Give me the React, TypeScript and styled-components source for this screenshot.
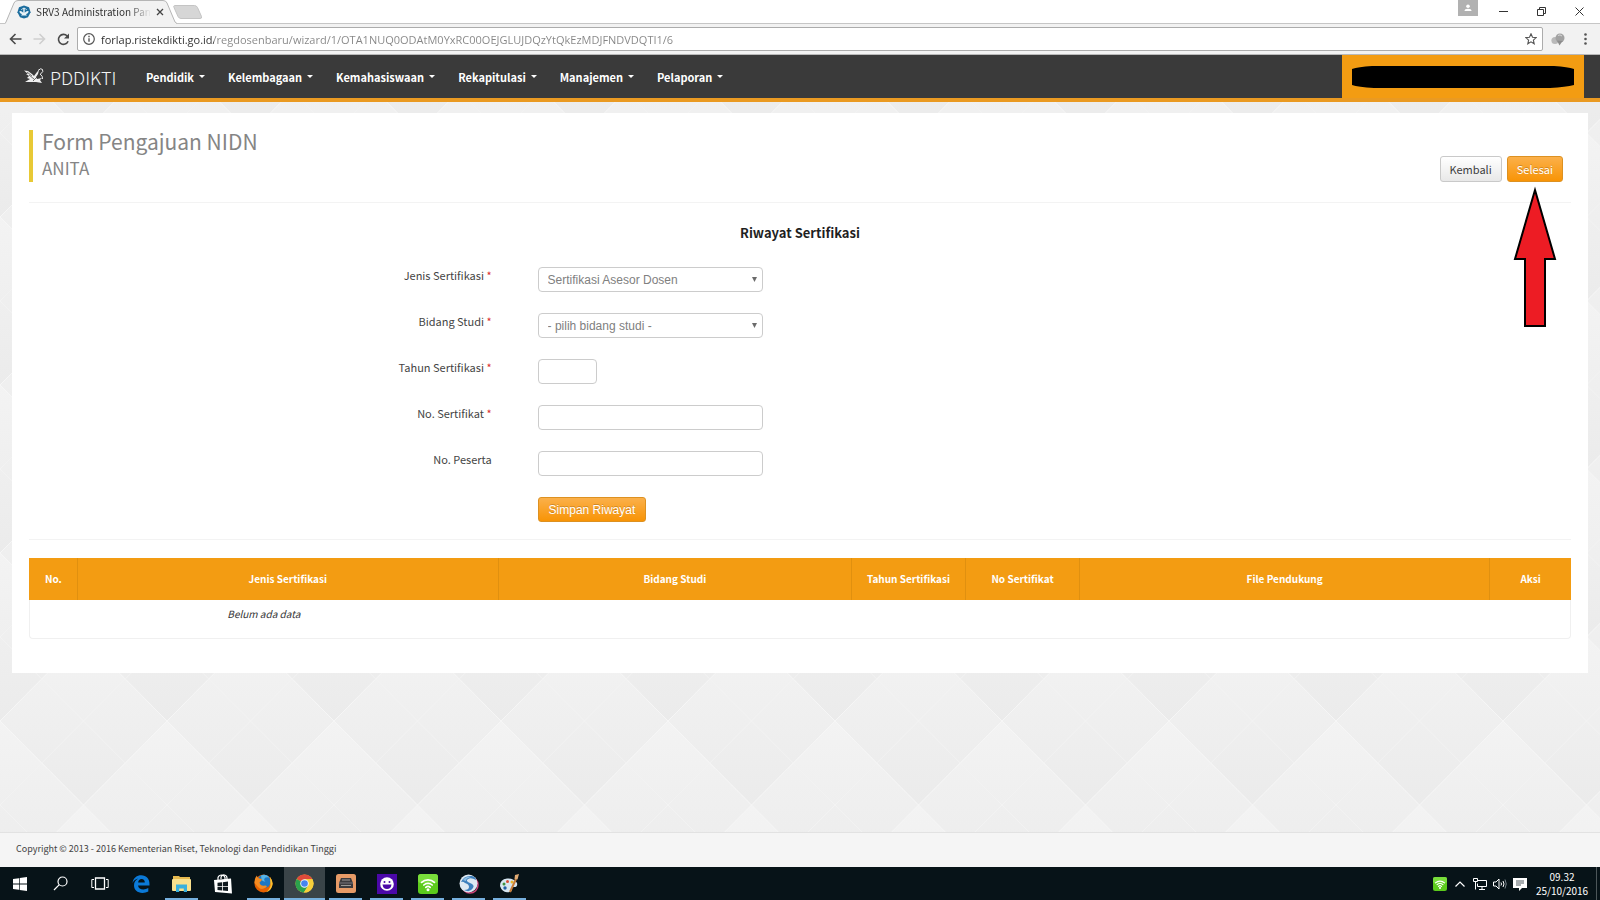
import React from "react";
import styled, { createGlobalStyle, css } from "styled-components";

const siteFont = `"Noto Sans CJK JP", "Noto Sans", sans-serif`;
const systemFont = `"Open Sans", "Noto Sans", sans-serif`;
const formFont = `"Liberation Sans", Arial, sans-serif`;

const Global = createGlobalStyle`
  *, *::before, *::after { box-sizing: border-box; }
  body { margin: 0; font-family: ${siteFont}; color: #333; background: #efefef; }
  button, input, select { margin: 0; font: inherit; }
`;

const Screen = styled.div`
  display: flex;
  flex-direction: column;
  min-height: 100vh;
`;

/* ---------- browser frame ---------- */

const TabStrip = styled.div`
  display: flex;
  align-items: flex-end;
  height: 24px;
  background: #fff;
  border-bottom: 1px solid #c6c6c6;
`;

const Tab = styled.div`
  position: relative;
  display: flex;
  align-items: center;
  gap: 5px;
  width: 172px;
  height: 24px;
  margin: 0 0 -1px 5px;
  padding: 0 15px 0 12px;
`;

const TabShape = styled.svg`
  position: absolute;
  left: 0;
  top: 0;
`;

const TabIcon = styled.svg`
  position: relative;
  flex: none;
`;

const TabTitle = styled.span`
  position: relative;
  flex: 1;
  white-space: nowrap;
  font-size: 10px;
  line-height: 16px;
  color: #333;
  -webkit-mask-image: linear-gradient(to right, #000 80%, transparent);
  mask-image: linear-gradient(to right, #000 80%, transparent);
`;

const PlainButton = styled.button`
  position: relative;
  display: flex;
  align-items: center;
  justify-content: center;
  flex: none;
  padding: 0;
  border: 0;
  background: none;
  color: inherit;
  cursor: pointer;
`;

const NewTab = styled(PlainButton)`
  align-self: center;
  margin-left: -4px;
`;

const WindowControls = styled.div`
  display: flex;
  align-items: center;
  align-self: stretch;
  margin-left: auto;
  padding-right: 2px;
`;

const ProfileButton = styled(PlainButton)`
  align-self: flex-start;
  width: 20px;
  height: 16px;
  margin-right: 6px;
  background: #b1b1b1;
`;

const WindowButton = styled(PlainButton)`
  width: 38px;
  height: 22px;
`;

const Toolbar = styled.div`
  display: flex;
  align-items: center;
  height: 31px;
  padding: 0 8px 0 3px;
  background: #f2f2f2;
  border-bottom: 1px solid #b9b9b9;
`;

const ToolButton = styled(PlainButton)`
  width: 24px;
  height: 24px;
`;

const MenuButton = styled(PlainButton)`
  width: 14px;
  height: 24px;
  margin-left: 8px;
`;

const AddressBar = styled.div`
  display: flex;
  align-items: center;
  flex: 1;
  gap: 6px;
  height: 24px;
  margin: 0 3px 0 2px;
  padding: 0 5px;
  background: #fff;
  border: 1px solid #acacac;
  border-radius: 2px;
`;

const AddressInput = styled.input`
  flex: 1;
  min-width: 0;
  height: 20px;
  padding: 0;
  border: 0;
  outline: 0;
  font-family: ${systemFont};
  font-size: 11px;
  color: transparent;
  background: linear-gradient(to right, #2b2b2b 113px, #858585 113px);
  -webkit-background-clip: text;
  background-clip: text;
`;

/* ---------- site header ---------- */

const NavBar = styled.header`
  display: flex;
  height: 47px;
  padding: 0 16px 0 24px;
  background: #3a3a3a;
  border-bottom: 4px solid #ea9a22;
`;

const Brand = styled.a`
  display: flex;
  align-items: center;
  gap: 6px;
  width: 122px;
  color: #f4f4f4;
  font-size: 18px;
  font-weight: 300;
  line-height: 24px;
  text-decoration: none;
`;

const Menu = styled.nav`
  display: flex;
  align-items: center;
  gap: 23px;
`;

const MenuLink = styled.a`
  display: flex;
  align-items: center;
  gap: 5px;
  color: #fff;
  font-size: 11px;
  font-weight: 700;
  line-height: 20px;
  text-decoration: none;

  &::after {
    content: "";
    border: 3px solid transparent;
    border-top-color: #fff;
    border-bottom: 0;
  }
`;

const UserBox = styled.div`
  display: flex;
  align-items: center;
  justify-content: center;
  width: 242px;
  margin-left: auto;
  background: #f39c12;
`;

/* ---------- page body ---------- */

const Page = styled.main`
  position: relative;
  flex: 1;
  padding: 11px 12px 0;
`;

const Backdrop = styled.svg`
  position: absolute;
  inset: 0;
  width: 100%;
  height: 100%;
`;

const Card = styled.section`
  position: relative;
  padding: 17px 17px 34px;
  background: #fff;
`;

const CardHead = styled.div`
  display: flex;
  justify-content: space-between;
  align-items: flex-end;
  padding-bottom: 20px;
  border-bottom: 1px solid #f3f3f3;
`;

const TitleBlock = styled.div`
  height: 52px;
  padding-left: 9px;
  border-left: 4px solid #e8c935;
  color: #858585;
`;

const Title = styled.h1`
  margin: 0 0 4px;
  font-size: 21px;
  font-weight: 400;
  line-height: 22px;
`;

const Subtitle = styled.p`
  margin: 0;
  font-size: 17px;
  line-height: 24px;
`;

const Actions = styled.div`
  position: relative;
  display: flex;
  gap: 5px;
  padding-right: 8px;
`;

const Button = styled.button<{ $primary?: boolean; $form?: boolean }>`
  height: ${(p) => (p.$form ? 25 : 26)}px;
  padding: 0 ${(p) => (p.$form ? 10 : 9)}px;
  border: 1px solid #c9c9c9;
  border-radius: 3px;
  background: linear-gradient(#fff, #e8e8e8);
  color: #3c3c3c;
  font-family: ${(p) => (p.$form ? formFont : siteFont)};
  font-size: ${(p) => (p.$form ? 12 : 11)}px;
  line-height: 20px;
  cursor: pointer;
  ${(p) =>
    p.$primary &&
    css`
      border-color: #dd9121;
      background: linear-gradient(#fbb04a, #f89406);
      color: #fff;
      text-shadow: 0 -1px 0 rgba(0, 0, 0, 0.2);
    `}
`;

const Pointer = styled.svg`
  position: absolute;
  right: 14px;
  top: 30px;
  pointer-events: none;
`;

const Form = styled.form`
  padding-bottom: 17px;
  border-bottom: 1px solid #f3f3f3;
`;

const FormTitle = styled.h2`
  margin: 0;
  padding: 18px 0 22px;
  color: #1f1f1f;
  font-size: 13px;
  font-weight: 700;
  line-height: 24px;
  text-align: center;
`;

const Field = styled.div`
  display: grid;
  grid-template-columns: 30% 1fr;
  column-gap: 46px;
  align-items: start;
  margin-bottom: 21px;

  &:last-child { margin-bottom: 0; }
`;

const Label = styled.label`
  color: #444;
  font-size: 11px;
  line-height: 16px;
  text-align: right;
`;

const Required = styled.span`
  color: #d9302c;
`;

const Control = styled.div`
  position: relative;
  display: flex;
  width: 225px;
  grid-column: 2;
`;

const controlBox = css`
  width: 100%;
  height: 25px;
  border: 1px solid #ccc;
  border-radius: 4px;
  background: #fff;
  color: #808080;
  font-family: ${formFont};
  font-size: 12px;
`;

const TextInput = styled.input<{ $short?: boolean }>`
  ${controlBox}
  width: ${(p) => (p.$short ? "59px" : "100%")};
  padding: 0 8px;
`;

const Select = styled.select`
  ${controlBox}
  appearance: none;
  padding: 0 20px 0 9px;
`;

const SelectArrow = styled.svg`
  position: absolute;
  right: 6px;
  top: 10px;
  pointer-events: none;
`;

const Table = styled.table`
  width: 100%;
  margin-top: 18px;
  table-layout: fixed;
  border-collapse: separate;
  border-spacing: 0;
  font-size: 10px;
  line-height: 18px;
  text-align: center;
`;

const HeadCell = styled.th<{ $width: number }>`
  width: ${(p) => p.$width}%;
  height: 42px;
  padding: 0;
  border-left: 1px solid #e0900f;
  background: #f39c12;
  color: #fff;
  font-weight: 700;

  &:first-child { border-left-color: #f39c12; }
`;

const BodyCell = styled.td`
  height: 39px;
  padding: 5px 8px 15px;
  border-bottom: 1px solid #f0f0f0;
  font-style: italic;

  &:first-child {
    border-left: 1px solid #f0f0f0;
    border-bottom-left-radius: 4px;
  }

  &:last-child {
    border-right: 1px solid #f0f0f0;
    border-bottom-right-radius: 4px;
  }
`;

const Footer = styled.footer`
  position: relative;
  height: 35px;
  padding: 6px 16px;
  border-top: 1px solid #e2e2e2;
  background: #f5f5f5;
  color: #444;
  font-size: 9px;
  line-height: 20px;
`;

/* ---------- desktop taskbar ---------- */

const Taskbar = styled.div`
  display: flex;
  height: 33px;
  background: #071318;
  color: #fff;
  font-family: ${systemFont};
`;

const Task = styled(PlainButton)<{ $app?: boolean; $open?: boolean; $active?: boolean }>`
  width: ${(p) => (p.$app ? 41 : 40)}px;
  height: 33px;
  background: ${(p) => (p.$active ? "#3a4448" : "none")};

  &::after {
    content: "";
    position: absolute;
    bottom: 0;
    left: ${(p) => (p.$active ? 0 : 4)}px;
    right: ${(p) => (p.$active ? 0 : 4)}px;
    height: ${(p) => (p.$open || p.$active ? 2 : 0)}px;
    background: #76b0de;
  }
`;

const Tray = styled.div`
  display: flex;
  align-items: center;
  gap: 6px;
  margin-left: auto;
  padding-right: 3px;
`;

const Clock = styled.div`
  width: 56px;
  margin-left: 1px;
  font-family: ${siteFont};
  font-size: 10px;
  line-height: 14px;
  text-align: center;
`;

const DesktopEdge = styled.div`
  width: 1px;
  height: 33px;
  background: #4c5659;
`;

const menuItems = ["Pendidik", "Kelembagaan", "Kemahasiswaan", "Rekapitulasi", "Manajemen", "Pelaporan"];

const columns: [string, number][] = [
  ["No.", 3.1],
  ["Jenis Sertifikasi", 27.3],
  ["Bidang Studi", 22.9],
  ["Tahun Sertifikasi", 7.4],
  ["No Sertifikat", 7.4],
  ["File Pendukung", 26.6],
  ["Aksi", 5.3],
];

function Wifi({ size }: { size: number }) {
  return (
    <svg width={size} height={size} viewBox="0 0 20 20">
      <rect width="20" height="20" rx="3" fill="#5ccb1c" />
      <rect width="20" height="9" rx="3" fill="#79dd3b" />
      <g fill="none" stroke="#fff" strokeWidth="1.7" strokeLinecap="round">
        <path d="M3.600 8.400a9.200 9.200 0 0 1 12.800 0M5.800 11a6 6 0 0 1 8.400 0M7.800 13.400a3.200 3.200 0 0 1 4.400 0" />
      </g>
      <circle cx="10" cy="15.800" r="1.500" fill="#fff" />
    </svg>
  );
}

function BrowserFrame() {
  return (
    <>
      <TabStrip>
        <Tab>
          <TabShape width="172" height="24">
            <path d="M0 24 L1 22 L9 3 Q10 .5 13 .5 L158 .5 Q161 .5 162 3 L170 22 L172 24 Z" fill="#f2f2f2" />
            <path d="M0 23.5 L1 22 L9 3 Q10 .5 13 .5 L158 .5 Q161 .5 162 3 L170 22 L172 23.5" fill="none" stroke="#b5b5b5" />
          </TabShape>
          <TabIcon width="14" height="14" viewBox="0 0 14 14">
            <path d="M7 .5l5 1.8 1.6 5-2.6 5-4 1.3-4-1.3-2.6-5 1.6-5z" fill="#1c6d9e" />
            <path d="M2.3 6.2q2.4-.6 4 1.6V3.5l.7-1.3.7 1.3v4.3q1.6-2.2 4-1.6-.3 2.7-2.7 3l1 1.4H4l1-1.4q-2.4-.3-2.7-3z" fill="#e9f3f8" />
            <path d="M4.300 5a3 3 0 0 1 5.400 0" fill="none" stroke="#e9f3f8" strokeWidth=".8" />
          </TabIcon>
          <TabTitle>SRV3 Administration Pan</TabTitle>
          <PlainButton aria-label="Close tab">
            <svg width="8" height="8" viewBox="0 0 8 8">
              <path d="M1 1l6 6M7 1L1 7" stroke="#444" strokeWidth="1.3" />
            </svg>
          </PlainButton>
        </Tab>
        <NewTab aria-label="New tab">
          <svg width="30" height="14" viewBox="0 0 30 14">
            <path d="M1.5.5h20q2 0 3 2l4 9q.7 2-1.5 2H8q-2 0-3-2l-4-9q-.7-2 .5-2z" fill="#d6d6d6" stroke="#c4c4c4" />
          </svg>
        </NewTab>
        <WindowControls>
          <ProfileButton aria-label="Profile">
            <svg width="8" height="8" viewBox="0 0 8 8" fill="#fff">
              <circle cx="4" cy="2.2" r="1.8" />
              <path d="M.5 7q0-2.200 3.500-2.200T7.500 7z" />
            </svg>
          </ProfileButton>
          <WindowButton aria-label="Minimize">
            <svg width="9" height="9"><path d="M0 4.500h9" stroke="#333" /></svg>
          </WindowButton>
          <WindowButton aria-label="Restore">
            <svg width="9" height="9" fill="none" stroke="#333">
              <path d="M.5 2.500h6v6h-6zM2.500 2.500v-2h6v6h-2" />
            </svg>
          </WindowButton>
          <WindowButton aria-label="Close">
            <svg width="9" height="9"><path d="M.5.5l8 8M8.500.5l-8 8" stroke="#333" /></svg>
          </WindowButton>
        </WindowControls>
      </TabStrip>
      <Toolbar>
        <ToolButton aria-label="Back">
          <svg width="13" height="12" viewBox="0 0 13 12" fill="none" stroke="#4a4a4a" strokeWidth="1.6">
            <path d="M12.500 6H1.500M6.500 1l-5 5 5 5" />
          </svg>
        </ToolButton>
        <ToolButton aria-label="Forward">
          <svg width="13" height="12" viewBox="0 0 13 12" fill="none" stroke="#cfcfcf" strokeWidth="1.6">
            <path d="M.5 6h11M6.500 1l5 5-5 5" />
          </svg>
        </ToolButton>
        <ToolButton aria-label="Reload">
          <svg width="13" height="13" viewBox="0 0 13 13">
            <path d="M11.100 8.300A5 5 0 1 1 10.200 3" fill="none" stroke="#4a4a4a" strokeWidth="1.6" />
            <path d="M12 .6v5H7z" fill="#4a4a4a" />
          </svg>
        </ToolButton>
        <AddressBar>
          <svg width="12" height="12" viewBox="0 0 12 12">
            <circle cx="6" cy="6" r="5.3" fill="none" stroke="#555" strokeWidth="1.2" />
            <path d="M6 5.200v3.600M6 2.800v1.400" stroke="#555" strokeWidth="1.4" />
          </svg>
          <AddressInput
            aria-label="Address"
            readOnly
            value="forlap.ristekdikti.go.id/regdosenbaru/wizard/1/OTA1NUQ0ODAtM0YxRC00OEJGLUJDQzYtQkEzMDJFNDVDQTI1/6"
          />
          <PlainButton aria-label="Bookmark this page">
            <svg width="12" height="12" viewBox="0 0 12 12" fill="none" stroke="#555" strokeWidth="1.1">
              <path d="M6 .8l1.500 3.500 3.700.3-2.800 2.500.8 3.700L6 8.900l-3.200 1.900.8-3.700L.8 4.600l3.700-.3z" />
            </svg>
          </PlainButton>
        </AddressBar>
        <ToolButton aria-label="Extension">
          <svg width="14" height="13" viewBox="0 0 14 13">
            <circle cx="4" cy="7.500" r="3.600" fill="#b9b9b9" />
            <circle cx="9" cy="5" r="4.500" fill="#a2a2a2" />
            <path d="M6 7.500l2.500 5 3-4.500z" fill="#8c8c8c" />
            <path d="M7 2.500q2-1.500 4 .5" stroke="#d9d9d9" fill="none" />
          </svg>
        </ToolButton>
        <MenuButton aria-label="Menu">
          <svg width="3" height="12" fill="#555">
            <circle cx="1.5" cy="1.5" r="1.3" />
            <circle cx="1.5" cy="6" r="1.3" />
            <circle cx="1.5" cy="10.5" r="1.3" />
          </svg>
        </MenuButton>
      </Toolbar>
    </>
  );
}

function SiteHeader() {
  return (
    <NavBar>
      <Brand href="#">
        <svg width="20" height="17" viewBox="0 0 20 17">
          <path d="M0 2.500l4 .5 4 3 2 2 3-4 2-2-1 4-2 3 1 2 5-1-2 2 2 3-6-1H1l5-3-3-1 2-2-3-2 2 0z" fill="#efefef" />
          <path d="M14 2.500q3-3 4.500-1t-2 4.500M16 6q3 2 2.500 5" fill="none" stroke="#efefef" />
          <path d="M5 7l5 4M9 13l4-4M3 4l5 4" stroke="#3a3a3a" strokeWidth=".7" />
        </svg>
        PDDIKTI
      </Brand>
      <Menu>
        {menuItems.map((item) => (
          <MenuLink href="#" key={item}>{item}</MenuLink>
        ))}
      </Menu>
      <UserBox>
        <svg width="222" height="22" viewBox="0 0 222 22">
          <path d="M0 3Q6 1 20 0H202Q216 1 222 3V19Q214 21 198 22H22Q6 21 0 19Z" />
        </svg>
      </UserBox>
    </NavBar>
  );
}

function DiamondBackdrop() {
  return (
    <Backdrop aria-hidden="true">
      <defs>
        <linearGradient id="shade" x1="0" y1="0" x2="0" y2="1">
          <stop offset="0" stopColor="#f3f3f3" />
          <stop offset="1" stopColor="#ebebeb" />
        </linearGradient>
        <pattern id="diamonds" width="167" height="168" y="31" patternUnits="userSpaceOnUse">
          <path d="M83.500 0L167 84L83.500 168L0 84Z" fill="url(#shade)" />
          <path d="M0 -84L83.500 0L0 84L-83.500 0Z" fill="url(#shade)" />
          <path d="M167 -84L250.500 0L167 84L83.500 0Z" fill="url(#shade)" />
          <path d="M0 84L83.500 168L0 252L-83.500 168Z" fill="url(#shade)" />
          <path d="M167 84L250.500 168L167 252L83.500 168Z" fill="url(#shade)" />
          <path d="M0 84L83.500 0L167 84L83.500 168Z" fill="none" stroke="#f6f6f6" />
          <path d="M0 0L167 168M167 0L0 168" stroke="#f3f3f3" />
        </pattern>
      </defs>
      <rect width="100%" height="100%" fill="url(#diamonds)" />
    </Backdrop>
  );
}

function CertificationForm() {
  return (
    <Form onSubmit={(e) => e.preventDefault()}>
      <FormTitle>Riwayat Sertifikasi</FormTitle>
      <Field>
        <Label htmlFor="jenis">Jenis Sertifikasi <Required>*</Required></Label>
        <Control>
          <Select id="jenis"><option>Sertifikasi Asesor Dosen</option></Select>
          <SelectArrow width="5" height="5"><path d="M0 0h5L2.500 5z" fill="#6b6b6b" /></SelectArrow>
        </Control>
      </Field>
      <Field>
        <Label htmlFor="bidang">Bidang Studi <Required>*</Required></Label>
        <Control>
          <Select id="bidang"><option>- pilih bidang studi -</option></Select>
          <SelectArrow width="5" height="5"><path d="M0 0h5L2.500 5z" fill="#6b6b6b" /></SelectArrow>
        </Control>
      </Field>
      <Field>
        <Label htmlFor="tahun">Tahun Sertifikasi <Required>*</Required></Label>
        <Control><TextInput id="tahun" $short /></Control>
      </Field>
      <Field>
        <Label htmlFor="sertifikat">No. Sertifikat <Required>*</Required></Label>
        <Control><TextInput id="sertifikat" /></Control>
      </Field>
      <Field>
        <Label htmlFor="peserta">No. Peserta</Label>
        <Control><TextInput id="peserta" /></Control>
      </Field>
      <Field>
        <Control><Button type="submit" $primary $form>Simpan Riwayat</Button></Control>
      </Field>
    </Form>
  );
}

function DesktopTaskbar() {
  return (
    <Taskbar>
      <Task aria-label="Start">
        <svg width="14" height="14" viewBox="0 0 14 14" fill="#fff">
          <path d="M0 2l6-.8v5.400H0zM6.700 1.100L14 0v6.600H6.700zM0 7.400h6v5.400L0 12zM6.700 7.400H14V14l-7.300-1.100z" />
        </svg>
      </Task>
      <Task aria-label="Search">
        <svg width="15" height="15" viewBox="0 0 15 15" fill="none" stroke="#fff" strokeWidth="1.2">
          <circle cx="9.500" cy="5.500" r="4.500" />
          <path d="M6.300 8.700L1 14" />
        </svg>
      </Task>
      <Task aria-label="Task view">
        <svg width="18" height="13" viewBox="0 0 18 13" fill="none" stroke="#fff">
          <path d="M4.500 1h9v11h-9z" strokeWidth="1.3" />
          <path d="M3 2.500H.8v8H3M15 2.500h2.200v8H15" />
        </svg>
      </Task>
      <Task $app aria-label="Edge">
        <svg width="18" height="18" viewBox="0 0 17 17">
          <path d="M.5 7.500C1.300 2.800 4.600.3 8.700.3c5 0 7.900 3.500 7.800 8v1.500H5.700c.2 2.600 2.400 3.800 5 3.800 1.800 0 3.200-.5 4.700-1.300v3.300c-1.600.9-3.500 1.300-5.500 1.300-4.900 0-8-2.800-8-7.200 0-3 1.600-5.200 4-6.400C3 4.300 1.300 5.600.5 7.500zM5.800 7h6.300c0-2-1.100-3.200-3-3.200S6 5.100 5.800 7z" fill="#0b7ad8" />
        </svg>
      </Task>
      <Task $app $open aria-label="File Explorer">
        <svg width="19" height="17" viewBox="0 0 19 17">
          <path d="M1 2V1h6l1 1h10v13H1z" fill="#e6b94f" />
          <rect y="4" width="19" height="12" rx="1" fill="#f9e08d" />
          <path d="M4 9.500h11V17h-3.200v-3.500H7.200V17H4z" fill="#39b0dd" />
        </svg>
      </Task>
      <Task $app aria-label="Store">
        <svg width="18" height="20" viewBox="0 0 18 20">
          <path d="M4 7V3.500Q5 1 7.500 1T11 3.500V6M7 5V3Q8 .6 10.500 1T13 4v1" fill="none" stroke="#fff" strokeWidth="1.2" />
          <path d="M0 6l17-1.500 1 15L1 18z" fill="#fff" />
          <path d="M3.500 8.800l4.500-.5V12H3.500zM8.800 8.200l5.200-.6V12H8.800zM3.500 12.800H8v3.600l-4.500-.4zM8.800 12.800H14v4.300l-5.200-.6z" fill="#101a1f" />
        </svg>
      </Task>
      <Task $app $open aria-label="Firefox">
        <svg width="19" height="19" viewBox="0 0 19 19">
          <circle cx="9.500" cy="9.500" r="9" fill="#e66000" />
          <circle cx="10" cy="7.500" r="6.700" fill="#1c77c3" />
          <path d="M7 1.500q5-2 8.500 2-4-1-5 1t1 3q-3 .5-4-2z" fill="#56b4e8" />
          <path d="M.5 9Q.3 4 3 1.500 3 4 6 4.500 8 4.500 8 6L5.500 8.500q1 4 5.500 3 3 .5 1 2-5 3-8-.5z" fill="#f58a1f" />
          <path d="M16 3q4 5 2 9.500-1.500 4.500-6 5.800 4-2.800 4.500-7z" fill="#fbc02d" />
        </svg>
      </Task>
      <Task $app $active aria-label="Chrome">
        <svg width="19" height="19" viewBox="0 0 20 20">
          <circle cx="10" cy="10" r="9.500" fill="#f7cf3b" />
          <path d="M10 10L1.800 5.200A9.500 9.500 0 0 1 18.300 5.500H10z" fill="#df4a3a" />
          <path d="M10 10L1.800 5.200A9.500 9.500 0 0 0 9.300 19.500L14 12z" fill="#2ba24c" />
          <path d="M10 5.500h8.300A9.500 9.500 0 0 1 9.300 19.500L14 12z" fill="#f7cf3b" />
          <circle cx="10" cy="10" r="4.500" fill="#f4f4f4" />
          <circle cx="10" cy="10" r="3.500" fill="#4584ee" />
        </svg>
      </Task>
      <Task $app $open aria-label="Printer">
        <svg width="20" height="19" viewBox="0 0 20 19">
          <rect width="20" height="19" rx="2.500" fill="#e79b67" />
          <path d="M5 4h10l2 5v5H3V9z" fill="#3c3b3e" />
          <path d="M6 6h8M5 11.500h10" stroke="#9d9a97" />
          <path d="M3 9h14" stroke="#77757a" />
        </svg>
      </Task>
      <Task $app $open aria-label="Messenger">
        <svg width="20" height="20" viewBox="0 0 20 20">
          <rect width="20" height="20" fill="#4b08a8" />
          <circle cx="10" cy="10" r="6.800" fill="#fff" />
          <circle cx="7.500" cy="8" r="1" fill="#4b08a8" />
          <circle cx="12.500" cy="8" r="1" fill="#4b08a8" />
          <path d="M5.500 10.500h9q-.5 4.500-4.500 4.500t-4.500-4.500z" fill="#4b08a8" />
        </svg>
      </Task>
      <Task $app $open aria-label="Hotspot"><Wifi size={20} /></Task>
      <Task $app $open aria-label="Sync">
        <svg width="20" height="20" viewBox="0 0 20 20">
          <circle cx="11" cy="11" r="8" fill="none" stroke="#cf4479" strokeWidth="1.5" />
          <circle cx="9.500" cy="9.500" r="9" fill="#dfe9f2" />
          <path d="M2 8Q5 1 13 2 17 3 17 6 12 3 9 5t2 4q5 2 3 5-3 5-9 2 5 0 5-3T6 9Q4 7 2 8z" fill="#3f80bd" />
          <path d="M4 6q3-4 8-3-5 1-5 4z" fill="#8fc0e6" />
        </svg>
      </Task>
      <Task $app $open aria-label="Paint">
        <svg width="21" height="20" viewBox="0 0 21 20">
          <path d="M1 12Q1 5 8 4.500T18 9q1 4-3 4-3 0-2 2.500 0 3-5 2.800T1 12z" fill="#d7e6f1" />
          <circle cx="5" cy="10" r="1.500" fill="#3f8f3f" />
          <circle cx="8.500" cy="7.500" r="1.500" fill="#d94b35" />
          <circle cx="13" cy="8" r="1.500" fill="#e7b52c" />
          <circle cx="6" cy="14" r="1.700" fill="#235fa4" />
          <path d="M11 18L17 5" stroke="#c67b37" strokeWidth="2" />
          <path d="M15.500 5l.5-4 4-1-1.500 5.500z" fill="#e0aa73" />
        </svg>
      </Task>
      <Tray>
        <Wifi size={14} />
        <PlainButton aria-label="Hidden icons">
          <svg width="14" height="14" viewBox="0 0 14 14"><path d="M2.500 9.500L7 5l4.500 4.500" fill="none" stroke="#fff" strokeWidth="1.2" /></svg>
        </PlainButton>
        <svg width="14" height="14" viewBox="0 0 14 14" fill="none" stroke="#fff">
          <path d="M5 3.500h8.500v6H4.500V6.500M9 9.500v3M6 12.500h6M.5 1.500h4v3h-4zM2.500 4.500v8" />
        </svg>
        <svg width="14" height="14" viewBox="0 0 14 14" fill="none" stroke="#fff">
          <path d="M.5 5h2.500l3-3v10l-3-3H.5zM8 5.500q1 1.500 0 3M10 4q2 3 0 6" />
          <path d="M12 2.500q2.500 4.500 0 9" stroke="#78838a" />
        </svg>
        <PlainButton aria-label="Notifications">
          <svg width="14" height="14" viewBox="0 0 14 14">
            <path d="M0 1h14v10H9l-3 3v-3H0z" fill="#fff" />
            <path d="M3 4h8M3 6h8M3 8h5" stroke="#26343a" strokeWidth=".8" />
          </svg>
        </PlainButton>
        <Clock>09.32<br />25/10/2016</Clock>
        <DesktopEdge />
      </Tray>
    </Taskbar>
  );
}

export default function App() {
  return (
    <Screen>
      <Global />
      <BrowserFrame />
      <SiteHeader />
      <Page>
        <DiamondBackdrop />
        <Card>
          <CardHead>
            <TitleBlock>
              <Title>Form Pengajuan NIDN</Title>
              <Subtitle>ANITA</Subtitle>
            </TitleBlock>
            <Actions>
              <Button type="button">Kembali</Button>
              <Button type="button" $primary>Selesai</Button>
              <Pointer width="44" height="142" viewBox="0 0 44 142">
                <path d="M22 4L42 73H32V140H12V73H2Z" fill="#ed1c24" stroke="#000" strokeWidth="2" />
              </Pointer>
            </Actions>
          </CardHead>
          <CertificationForm />
          <Table>
            <thead>
              <tr>
                {columns.map(([name, width]) => (
                  <HeadCell key={name} $width={width} scope="col">{name}</HeadCell>
                ))}
              </tr>
            </thead>
            <tbody>
              <tr>
                <BodyCell colSpan={2}>Belum ada data</BodyCell>
                <BodyCell colSpan={5} />
              </tr>
            </tbody>
          </Table>
        </Card>
      </Page>
      <Footer>Copyright © 2013 - 2016 Kementerian Riset, Teknologi dan Pendidikan Tinggi</Footer>
      <DesktopTaskbar />
    </Screen>
  );
}
